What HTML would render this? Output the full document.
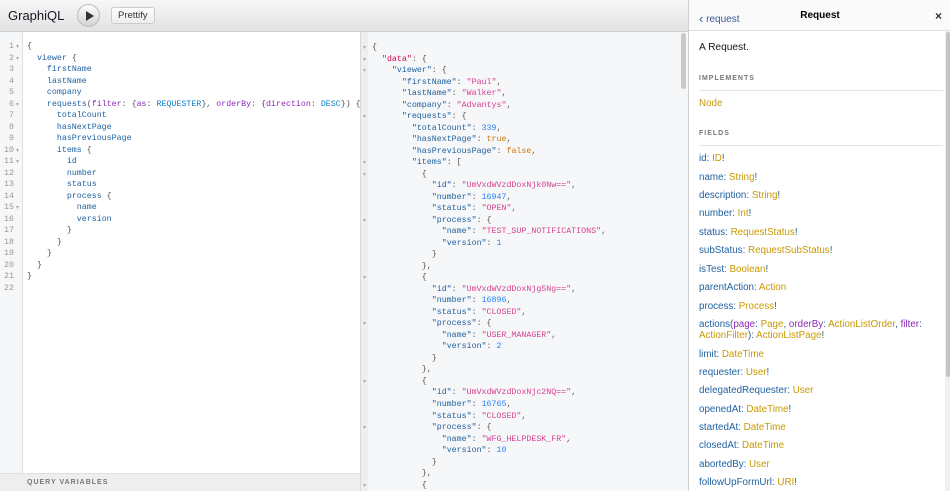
<!DOCTYPE html>
<html><head><meta charset="utf-8"><style>
*{margin:0;padding:0;box-sizing:border-box}
body{width:950px;height:491px;overflow:hidden;background:#fff;font-family:"Liberation Sans",sans-serif;position:relative}
.tb{position:absolute;left:0;top:0;width:688px;height:32px;background:linear-gradient(#f7f7f7,#e2e2e2);border-bottom:1px solid #d0d0d0}
.title{position:absolute;left:8px;top:8px;font-size:13px;color:#141823}
.run{position:absolute;left:77px;top:4px;width:23px;height:23px;border-radius:50%;background:linear-gradient(#fdfdfd,#d2d3d6);border:1px solid #bbb}
.run:after{content:"";position:absolute;left:8px;top:6px;border-left:8px solid #333;border-top:5px solid transparent;border-bottom:5px solid transparent}
.pret{position:absolute;left:111px;top:7px;height:17px;padding:0 6px;font-size:9.5px;line-height:16px;border:1px solid #ccc;border-radius:3px;background:linear-gradient(#fdfdfd,#eee);color:#333}
.qgut{position:absolute;left:0;top:32px;width:23px;height:441px;background:#f6f7f8;border-right:1px solid #e0e0e0}
.qed{position:absolute;left:23px;top:32px;width:337px;height:441px;background:#fff}
pre{font-family:"Liberation Mono",monospace;font-size:8.3px;line-height:11.52px;position:absolute}
.ln{left:0;top:41px;width:14px;text-align:right;color:#999}
.fa{color:#aaa;font-size:6px}
.qv{position:absolute;left:0;top:473px;width:360px;height:18px;background:#eeeeee;border-top:1px solid #e0e0e0;font-size:7px;font-weight:bold;letter-spacing:1px;color:#777;padding:5px 0 0 27px}
.mid{position:absolute;left:360px;top:32px;width:8px;height:459px;background:#eee;border-left:1px solid #d8d8d8}
.res{position:absolute;left:368px;top:32px;width:320px;height:459px;background:#f6f7f8}
.sb{position:absolute;left:681px;top:33px;width:5px;height:56px;background:#c8c8c8;border-radius:3px}
.k{color:#1f61a0}.a{color:#8b2bb9}.e{color:#0b7fc7}.s{color:#d64292}.n{color:#2882f9}.b{color:#d47509}.d{color:#d2054e}
.doc{position:absolute;left:688px;top:0;width:262px;height:491px;background:#fff;border-left:1px solid #d0d0d0}
.dh{position:absolute;left:0;top:0;width:262px;height:31px;border-bottom:1px solid #e0e0e0;background:#fafafa}
.back{position:absolute;left:10px;top:10px;font-size:10px;color:#3b5998}
.dt{position:absolute;left:0;width:262px;top:10px;text-align:center;font-size:10px;font-weight:bold;color:#000}
.x{position:absolute;left:246px;top:9px;font-size:12px;font-weight:bold;color:#333}
.dsb{position:absolute;left:256px;top:31px;width:6px;height:460px;background:#f0f0f0}
.dsb i{position:absolute;left:1px;top:1px;width:4px;height:345px;background:#c4c4c4;border-radius:2px}
.dc{position:absolute;left:10px;font-size:9.8px;color:#1f61a0;white-space:nowrap}
.hd{position:absolute;left:10px;width:244px;font-size:7px;font-weight:bold;letter-spacing:1px;color:#777;border-bottom:1px solid #e4e4e4;padding-bottom:8px}
.t{color:#ca9800}
</style></head><body>
<div class="tb"><div class="title">GraphiQL</div><div class="run"></div><div class="pret">Prettify</div></div>
<div class="qgut"></div><div class="qed"></div>
<pre class="ln">1
2
3
4
5
6
7
8
9
10
11
12
13
14
15
16
17
18
19
20
21
22</pre>
<pre style="left:16px;top:41px" class="fa">▾
▾



▾



▾
▾



▾</pre>
<pre style="left:27px;top:41px;color:#555">{
  <span class="k">viewer</span> {
    <span class="k">firstName</span>
    <span class="k">lastName</span>
    <span class="k">company</span>
    <span class="k">requests</span>(<span class="a">filter</span>: {<span class="a">as</span>: <span class="e">REQUESTER</span>}, <span class="a">orderBy</span>: {<span class="a">direction</span>: <span class="e">DESC</span>}) {
      <span class="k">totalCount</span>
      <span class="k">hasNextPage</span>
      <span class="k">hasPreviousPage</span>
      <span class="k">items</span> {
        <span class="k">id</span>
        <span class="k">number</span>
        <span class="k">status</span>
        <span class="k">process</span> {
          <span class="k">name</span>
          <span class="k">version</span>
        }
      }
    }
  }
}
</pre>
<div class="qv">QUERY VARIABLES</div>
<div class="mid"></div><div class="res"></div><div class="sb"></div>
<pre style="left:363px;top:42px" class="fa">▾
▾
▾



▾



▾
▾



▾




▾



▾




▾



▾




▾</pre>
<pre style="left:372px;top:42px;color:#555">{
  <span class="d">"data"</span>: {
    <span class="k">"viewer"</span>: {
      <span class="k">"firstName"</span>: <span class="s">"Paul"</span>,
      <span class="k">"lastName"</span>: <span class="s">"Walker"</span>,
      <span class="k">"company"</span>: <span class="s">"Advantys"</span>,
      <span class="k">"requests"</span>: {
        <span class="k">"totalCount"</span>: <span class="n">339</span>,
        <span class="k">"hasNextPage"</span>: <span class="b">true</span>,
        <span class="k">"hasPreviousPage"</span>: <span class="b">false</span>,
        <span class="k">"items"</span>: [
          {
            <span class="k">"id"</span>: <span class="s">"UmVxdWVzdDoxNjk0Nw=="</span>,
            <span class="k">"number"</span>: <span class="n">16947</span>,
            <span class="k">"status"</span>: <span class="s">"OPEN"</span>,
            <span class="k">"process"</span>: {
              <span class="k">"name"</span>: <span class="s">"TEST_SUP_NOTIFICATIONS"</span>,
              <span class="k">"version"</span>: <span class="n">1</span>
            }
          },
          {
            <span class="k">"id"</span>: <span class="s">"UmVxdWVzdDoxNjg5Ng=="</span>,
            <span class="k">"number"</span>: <span class="n">16896</span>,
            <span class="k">"status"</span>: <span class="s">"CLOSED"</span>,
            <span class="k">"process"</span>: {
              <span class="k">"name"</span>: <span class="s">"USER_MANAGER"</span>,
              <span class="k">"version"</span>: <span class="n">2</span>
            }
          },
          {
            <span class="k">"id"</span>: <span class="s">"UmVxdWVzdDoxNjc2NQ=="</span>,
            <span class="k">"number"</span>: <span class="n">16765</span>,
            <span class="k">"status"</span>: <span class="s">"CLOSED"</span>,
            <span class="k">"process"</span>: {
              <span class="k">"name"</span>: <span class="s">"WFG_HELPDESK_FR"</span>,
              <span class="k">"version"</span>: <span class="n">10</span>
            }
          },
          {</pre>
<div class="doc">
<div class="dh"><div class="back"><span style="font-size:13px;position:relative;top:1px">‹</span> request</div><div class="dt">Request</div><div class="x">×</div></div>
<div class="dsb"><i></i></div>
<div class="dc" style="top:42px;color:#141823;font-size:10.2px">A Request.</div>
<div class="hd" style="top:75px">IMPLEMENTS</div>
<div class="dc t" style="top:98px">Node</div>
<div class="hd" style="top:130px">FIELDS</div>
<div class="dc" style="top:153px">id: <span class="t">ID</span>!</div>
<div class="dc" style="top:172px">name: <span class="t">String</span>!</div>
<div class="dc" style="top:190px">description: <span class="t">String</span>!</div>
<div class="dc" style="top:208px">number: <span class="t">Int</span>!</div>
<div class="dc" style="top:227px">status: <span class="t">RequestStatus</span>!</div>
<div class="dc" style="top:245px">subStatus: <span class="t">RequestSubStatus</span>!</div>
<div class="dc" style="top:264px">isTest: <span class="t">Boolean</span>!</div>
<div class="dc" style="top:282px">parentAction: <span class="t">Action</span></div>
<div class="dc" style="top:301px">process: <span class="t">Process</span>!</div>
<div class="dc" style="top:319px;line-height:11px">actions(<span class="a">page</span>: <span class="t">Page</span>, <span class="a">orderBy</span>: <span class="t">ActionListOrder</span>, <span class="a">filter</span>:<br><span class="t">ActionFilter</span>): <span class="t">ActionListPage</span>!</div>
<div class="dc" style="top:349px">limit: <span class="t">DateTime</span></div>
<div class="dc" style="top:367px">requester: <span class="t">User</span>!</div>
<div class="dc" style="top:385px">delegatedRequester: <span class="t">User</span></div>
<div class="dc" style="top:404px">openedAt: <span class="t">DateTime</span>!</div>
<div class="dc" style="top:422px">startedAt: <span class="t">DateTime</span></div>
<div class="dc" style="top:440px">closedAt: <span class="t">DateTime</span></div>
<div class="dc" style="top:459px">abortedBy: <span class="t">User</span></div>
<div class="dc" style="top:477px">followUpFormUrl: <span class="t">URI</span>!</div>
</div>
</body></html>
